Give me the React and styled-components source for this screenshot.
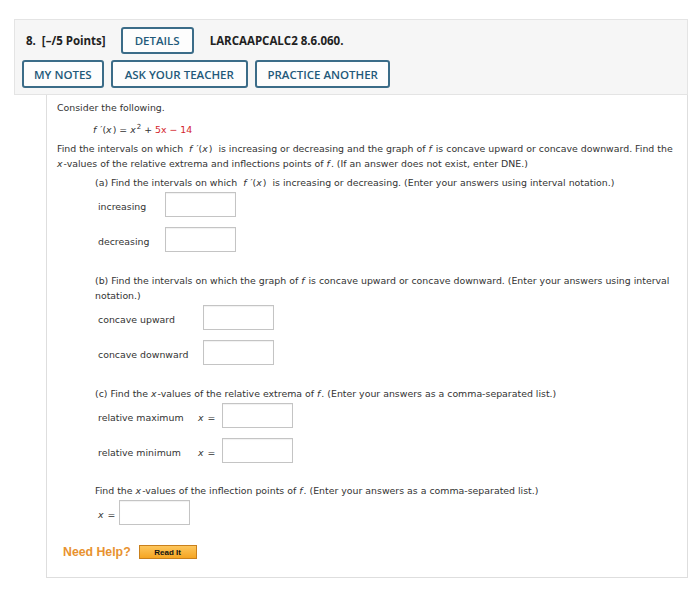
import React from "react";
import styled, { createGlobalStyle } from "styled-components";

const GlobalStyle = createGlobalStyle`
  html, body {
    margin: 0;
    padding: 0;
    background: #ffffff;
  }
`;

const Page = styled.div`
  padding: 19px 12px 14px 14px;
  width: 674px;
`;

const Header = styled.div`
  background: #f6f6f6;
  border: 1px solid #e4e4e4;
  padding: 7px 7px 6px 7px;
  display: flex;
  flex-direction: column;
  gap: 6px;
  font-family: "Open Sans", "Liberation Sans", sans-serif;
`;

const HeaderRow = styled.div`
  display: flex;
  align-items: center;
  gap: ${(p) => p.gap || 7}px;
  padding-left: ${(p) => p.indent || 0}px;
`;

const Title = styled.span`
  font-size: 11.5px;
  font-weight: 700;
  color: #222;
  margin-left: ${(p) => p.ml || 0}px;
`;

const HeaderButton = styled.button`
  font-family: "Open Sans", "Liberation Sans", sans-serif;
  font-size: 11.5px;
  font-weight: 600;
  color: #23597a;
  background: #fdfdfd;
  border: 2px solid #3b6c88;
  border-radius: 3px;
  height: ${(p) => p.h || 28}px;
  padding: 0 ${(p) => p.px || 10}px;
  cursor: pointer;
`;

const Panel = styled.div`
  margin-left: 32px;
  border: 1px solid #dedede;
  border-top: none;
  padding: 5px 10px 18px 10px;
  font-family: "DejaVu Sans", Verdana, sans-serif;
  font-size: 9.4px;
  color: #333;
  height: 483px;
  box-sizing: border-box;
`;

const Text = styled.p`
  margin: ${(p) => p.mt || 0}px 0 0 ${(p) => p.indent || 0}px;
  line-height: 15px;
`;

const I = styled.i`
  font-style: italic;
  padding-right: 1px;
`;

const Sup = styled.sup`
  font-size: 7px;
  line-height: 0;
`;

const Red = styled.span`
  color: #d4242c;
`;

const Row = styled.div`
  display: flex;
  align-items: center;
  margin: ${(p) => p.mt || 0}px 0 0 41px;
  height: 25px;
`;

const Label = styled.span`
  width: ${(p) => p.w}px;
  padding-top: 4px;
`;

const Box = styled.div`
  width: 71px;
  height: 25px;
  box-sizing: border-box;
  border: 1px solid #c4c4c4;
  background: #fff;
  box-shadow: inset 0 1px 1px rgba(0, 0, 0, 0.06);
`;

const Help = styled.div`
  display: flex;
  align-items: center;
  gap: 8px;
  margin: 20px 0 0 6px;
`;

const HelpText = styled.span`
  font-family: "Liberation Sans", Arial, sans-serif;
  font-weight: 700;
  font-size: 12.3px;
  color: #e8922f;
`;

const ReadIt = styled.button`
  width: 58px;
  height: 14px;
  padding: 0;
  font-family: "Liberation Sans", Arial, sans-serif;
  font-weight: 700;
  font-size: 8px;
  color: #111;
  background: linear-gradient(#fdc65c, #f5a522);
  border: 1px solid #c9801c;
  cursor: pointer;
`;

const fp = (
  <>
    <I>f</I> ′(<I>x</I>)
  </>
);

const AnswerRow = ({ label, w, eq, eqW, mt }) => (
  <Row mt={mt}>
    {label && <Label w={w}>{label}</Label>}
    {eq && (
      <Label w={eqW}>
        <I>x</I> =
      </Label>
    )}
    <Box />
  </Row>
);

export default function App() {
  return (
    <>
      <GlobalStyle />
      <Page>
        <Header>
          <HeaderRow indent={4} gap={15}>
            <Title>8.&nbsp; [–/5 Points]</Title>
            <HeaderButton h={27} px={12}>DETAILS</HeaderButton>
            <Title ml={1}>LARCAAPCALC2 8.6.060.</Title>
          </HeaderRow>
          <HeaderRow gap={7}>
            <HeaderButton px={10}>MY NOTES</HeaderButton>
            <HeaderButton px={12}>ASK YOUR TEACHER</HeaderButton>
            <HeaderButton px={10.5}>PRACTICE ANOTHER</HeaderButton>
          </HeaderRow>
        </Header>
        <Panel>
          <Text>Consider the following.</Text>
          <Text mt={7} indent={36}>
            {fp} = <I>x</I>
            <Sup>2</Sup> + <Red>5x − 14</Red>
          </Text>
          <Text mt={4}>
            Find the intervals on which &nbsp;{fp}&nbsp; is increasing or decreasing and the graph
            of <I>f</I> is concave upward or concave downward. Find the <I>x</I>-values of the
            relative extrema and inflections points of <I>f</I>. (If an answer does not exist,
            enter DNE.)
          </Text>
          <Text mt={4} indent={38}>
            (a) Find the intervals on which &nbsp;{fp}&nbsp; is increasing or decreasing. (Enter
            your answers using interval notation.)
          </Text>
          <AnswerRow mt={2} label="increasing" w={67} />
          <AnswerRow mt={10} label="decreasing" w={67} />
          <Text mt={21} indent={38}>
            (b) Find the intervals on which the graph of <I>f</I> is concave upward or concave
            downward. (Enter your answers using interval notation.)
          </Text>
          <AnswerRow mt={2} label="concave upward" w={105} />
          <AnswerRow mt={10} label="concave downward" w={105} />
          <Text mt={21} indent={38}>
            (c) Find the <I>x</I>-values of the relative extrema of <I>f</I>. (Enter your answers
            as a comma-separated list.)
          </Text>
          <AnswerRow mt={2} label="relative maximum" w={100} eq eqW={24} />
          <AnswerRow mt={10} label="relative minimum" w={100} eq eqW={24} />
          <Text mt={20} indent={38}>
            Find the <I>x</I>-values of the inflection points of <I>f</I>. (Enter your answers as a
            comma-separated list.)
          </Text>
          <AnswerRow mt={2} eq eqW={21} />
          <Help>
            <HelpText>Need Help?</HelpText>
            <ReadIt>Read It</ReadIt>
          </Help>
        </Panel>
      </Page>
    </>
  );
}
